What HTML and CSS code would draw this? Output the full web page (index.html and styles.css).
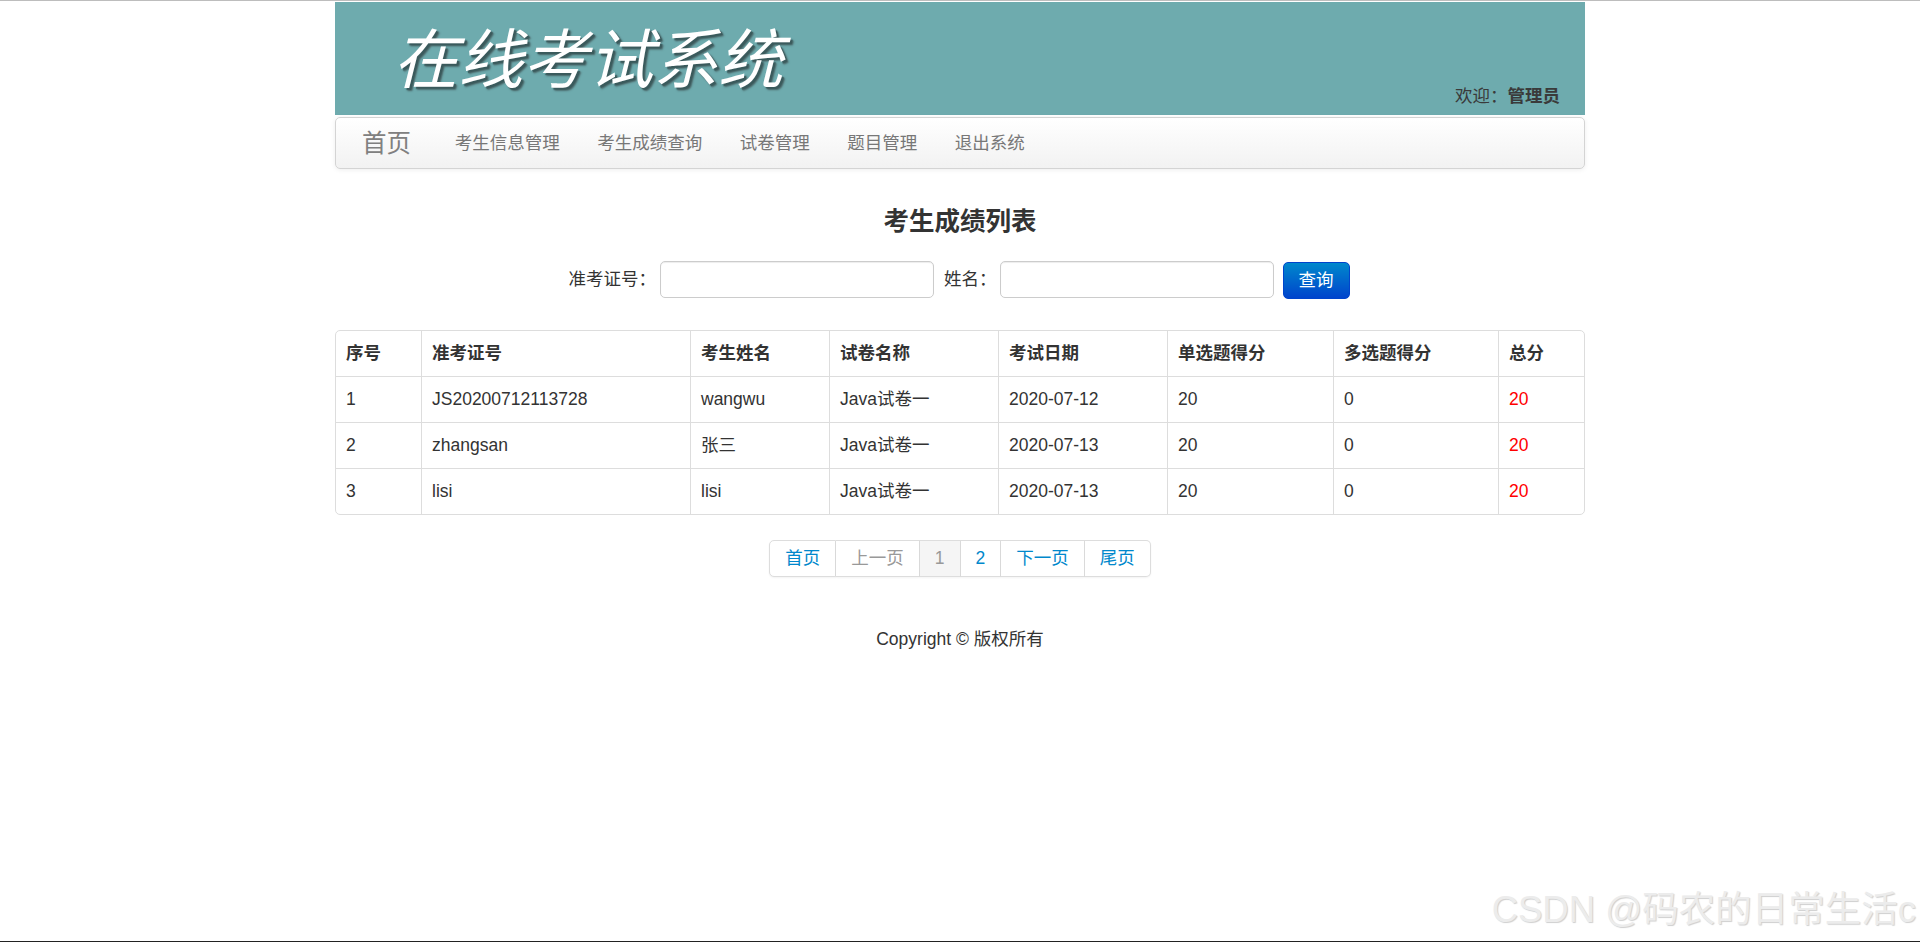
FILE: index.html
```html
<!DOCTYPE html>
<html lang="zh">
<head>
<meta charset="utf-8">
<title>在线考试系统</title>
<link rel="stylesheet" href="styles.css">
</head>
<body>
<div class="container">
  <header class="banner">
    <div class="logo">在线考试系统</div>
    <div class="welcome">欢迎：<b>管理员</b></div>
  </header>
  <nav class="navbar">
    <a class="brand">首页</a>
    <a class="nav-item">考生信息管理</a>
    <a class="nav-item">考生成绩查询</a>
    <a class="nav-item">试卷管理</a>
    <a class="nav-item">题目管理</a>
    <a class="nav-item">退出系统</a>
  </nav>
  <h3 class="title">考生成绩列表</h3>
  <form class="search">
    <label class="lab">准考证号：</label>
    <input class="field" type="text">
    <label class="lab lab-name">姓名：</label>
    <input class="field" type="text">
    <button class="btn" type="button">查询</button>
  </form>
  <div class="table-wrap">
    <table class="grid">
      <colgroup>
        <col class="c1"><col class="c2"><col class="c3"><col class="c4"><col class="c5"><col class="c6"><col class="c7"><col class="c8">
      </colgroup>
      <thead>
        <tr><th>序号</th><th>准考证号</th><th>考生姓名</th><th>试卷名称</th><th>考试日期</th><th>单选题得分</th><th>多选题得分</th><th>总分</th></tr>
      </thead>
      <tbody>
        <tr><td>1</td><td>JS20200712113728</td><td>wangwu</td><td>Java试卷一</td><td>2020-07-12</td><td>20</td><td>0</td><td class="total">20</td></tr>
        <tr><td>2</td><td>zhangsan</td><td>张三</td><td>Java试卷一</td><td>2020-07-13</td><td>20</td><td>0</td><td class="total">20</td></tr>
        <tr><td>3</td><td>lisi</td><td>lisi</td><td>Java试卷一</td><td>2020-07-13</td><td>20</td><td>0</td><td class="total">20</td></tr>
      </tbody>
    </table>
  </div>
  <div class="pager">
    <a class="page">首页</a><a class="page off">上一页</a><a class="page cur">1</a><a class="page">2</a><a class="page">下一页</a><a class="page">尾页</a>
  </div>
  <footer class="copy">Copyright © 版权所有</footer>
</div>
<div class="watermark">CSDN @码农的日常生活c</div>
</body>
</html>
```
FILE: styles.css
```css
* { box-sizing: border-box; }
html, body { margin: 0; padding: 0; }
body {
  position: relative;
  height: 942px;
  overflow: hidden;
  background: #fff;
  border-top: 1px solid #bdbdbd;
  border-bottom: 1px solid #222;
  font-family: "Liberation Sans", "Noto Sans CJK SC", sans-serif;
  font-size: 17.5px;
  line-height: 25px;
  color: #333;
}
.container { width: 1250px; margin: 0 auto; padding-top: 1px; }

.banner {
  height: 113px;
  background: #6eabae;
  display: flex;
  justify-content: space-between;
  align-items: flex-end;
  padding: 0 25px 6px 58px;
}
.logo {
  align-self: flex-start;
  margin-top: 13px;
  font-size: 65px;
  line-height: 80px;
  font-style: italic;
  color: #fff;
  font-family: "Noto Sans CJK SC", sans-serif;
  font-weight: 400;
  text-shadow: 2px 2px 1px #3a5a5c, 3px 3px 2px #4a6668;
}
.welcome { color: #3a3a3a; }
.welcome b { font-weight: 700; }

.navbar {
  margin-top: 2px;
  height: 52px;
  display: flex;
  align-items: center;
  padding-left: 26px;
  border: 1px solid #d4d4d4;
  border-radius: 5px;
  background: linear-gradient(#ffffff, #f2f2f2);
  box-shadow: 0 1px 5px rgba(0, 0, 0, .07);
}
.brand { font-size: 24.5px; color: #808080; margin-right: 25px; }
.nav-item { color: #777; padding: 0 18.75px; }

.title {
  margin: 37px 0 0;
  text-align: center;
  font-size: 25.5px;
  line-height: 30px;
  font-weight: 700;
  color: #333;
}

.search {
  margin-top: 24px;
  height: 38px;
  padding-right: 2px;
  display: flex;
  justify-content: center;
  align-items: center;
}
.lab { margin-right: 4px; }
.lab-name { margin-left: 10px; margin-right: 3px; }
.field {
  width: 274px;
  height: 37px;
  border: 1px solid #ccc;
  border-radius: 5px;
  background: #fff;
  box-shadow: inset 0 1px 1px rgba(0, 0, 0, .075);
  outline: none;
}
.btn {
  margin-left: 9px;
  margin-top: 3px;
  width: 67px;
  height: 37px;
  padding: 0;
  border: 1px solid #0044cc;
  border-radius: 5px;
  background: linear-gradient(#0088cc, #0044cc);
  color: #fff;
  font: inherit;
}

.table-wrap {
  margin-top: 32px;
  border: 1px solid #ddd;
  border-radius: 5px;
  overflow: hidden;
}
.grid { width: 100%; table-layout: fixed; border-collapse: separate; border-spacing: 0; }
.c1 { width: 85px; }
.c2 { width: 269px; }
.c3 { width: 139px; }
.c4 { width: 169px; }
.c5 { width: 169px; }
.c6 { width: 166px; }
.c7 { width: 165px; }
.c8 { width: 86px; }
.grid th, .grid td {
  padding: 10px 10px;
  height: 46px;
  text-align: left;
  border-left: 1px solid #ddd;
  border-top: 1px solid #ddd;
  font-size: 17.5px;
  line-height: 25px;
}
.grid th { font-weight: 700; border-top: 0; height: 45px; }
.grid th:first-child, .grid td:first-child { border-left: 0; }
.total { color: #ff0000; }

.pager {
  margin-top: 25px;
  display: flex;
  justify-content: center;
}
.page {
  height: 37px;
  padding: 5px 15px;
  border: 1px solid #ddd;
  border-left-width: 0;
  color: #0088cc;
  background: #fff;
  box-shadow: 0 1px 2px rgba(0, 0, 0, .05);
}
.page:first-child { border-left-width: 1px; border-radius: 5px 0 0 5px; }
.page:last-child { border-radius: 0 5px 5px 0; }
.off { color: #999; }
.cur { color: #999; background: #f5f5f5; }

.copy {
  margin-top: 50px;
  text-align: center;
}

.watermark {
  position: absolute;
  right: 4px;
  bottom: 6px;
  font-size: 36.5px;
  font-weight: 400;
  line-height: 50px;
  color: #ececec;
  white-space: nowrap;
  text-shadow: 1px 1px 1px #cfcfcf;
}
```
